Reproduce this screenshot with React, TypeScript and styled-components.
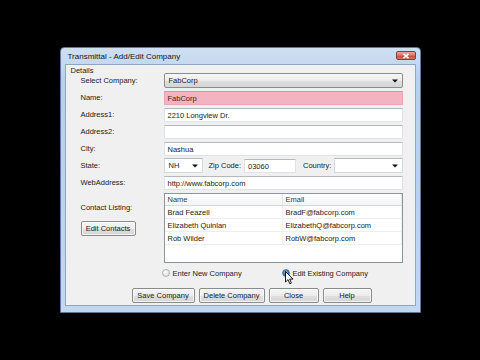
import React from "react";
import styled, { createGlobalStyle } from "styled-components";

const GlobalStyle = createGlobalStyle`
  html, body {
    margin: 0;
    padding: 0;
    background: #000;
  }
  body {
    font-family: "Liberation Sans", Arial, sans-serif;
    color: #1a1a1a;
  }
`;

const Screen = styled.div`
  width: 480px;
  height: 360px;
  display: flex;
  align-items: center;
  justify-content: center;
  background: #000;
`;

const Window = styled.div`
  position: relative;
  width: 361px;
  height: 266px;
  box-sizing: border-box;
  display: flex;
  flex-direction: column;
  padding: 0 4px 6px 4px;
  border: 1px solid #5d7a99;
  border-radius: 4px 4px 0 0;
  background: linear-gradient(#cfe0f3, #b9d0ea 12%, #bdd3ec 60%, #c3d8ef);
`;

const TitleBar = styled.div`
  height: 16px;
  display: flex;
  justify-content: space-between;
  padding-left: 3px;
`;

const Title = styled.span`
  font-size: 8px;
  line-height: 10px;
  margin-top: 4px;
  color: #141414;
`;

const CloseButton = styled.div`
  width: 20px;
  height: 9px;
  margin-top: 3px;
  box-sizing: border-box;
  display: flex;
  align-items: center;
  justify-content: center;
  border: 1px solid #8d3d38;
  border-radius: 2px;
  background: linear-gradient(#e9a99c, #d3705f 50%, #c4463a 51%, #d9745f);
`;

const Client = styled.div`
  position: relative;
  flex: 1;
  display: flex;
  flex-direction: column;
  background: #f0f0f0;
  border: 1px solid #8ea6c2;
`;

const GroupLabel = styled.div`
  height: 6px;
  margin: 2px 0 0 5px;
  font-size: 7.5px;
  line-height: 8px;
`;

const Form = styled.div`
  display: grid;
  grid-template-columns: 83px 1fr;
  grid-auto-rows: 15px;
  row-gap: 2px;
  padding: 0 12px 0 15px;
`;

const Label = styled.div`
  display: flex;
  align-items: center;
  font-size: 7.5px;
  white-space: nowrap;
`;

const InlineLabel = styled(Label)<{ $gap: number }>`
  margin: 0 3px 0 ${(p) => p.$gap}px;
`;

const TextBox = styled.div<{ $pink?: boolean; $width?: number }>`
  box-sizing: border-box;
  height: 14px;
  margin-top: 1px;
  ${(p) => (p.$width ? `width: ${p.$width}px;` : "flex: 1;")}
  padding-left: 3px;
  display: flex;
  align-items: center;
  font-size: 7.5px;
  background: ${(p) => (p.$pink ? "#f4b3c0" : "#fff")};
  border: 1px solid ${(p) => (p.$pink ? "#eaa5b3" : "#dfe3e8")};
  border-top-color: ${(p) => (p.$pink ? "#d9949f" : "#b4b8be")};
  color: ${(p) => (p.$pink ? "#3d1c22" : "#1a1a1a")};
`;

const Combo = styled.div<{ $flat?: boolean; $width?: number }>`
  box-sizing: border-box;
  height: 15px;
  ${(p) => (p.$width ? `width: ${p.$width}px;` : "flex: 1;")}
  padding: 0 4px 0 4px;
  display: flex;
  align-items: center;
  justify-content: space-between;
  font-size: 7.5px;
  border: 1px solid ${(p) => (p.$flat ? "#d6dbe1" : "#8b8d91")};
  border-top-color: ${(p) => (p.$flat ? "#b4b8be" : "#8b8d91")};
  border-radius: ${(p) => (p.$flat ? "0" : "2px")};
  background: ${(p) =>
    p.$flat ? "#fff" : "linear-gradient(#f7f7f7, #ececec 50%, #dedede 51%, #d5d5d5)"};
`;

const FieldRow = styled.div`
  display: flex;
`;

const Contacts = styled.div`
  display: grid;
  grid-template-columns: 83px 1fr;
  margin-top: 3px;
  padding: 0 12px 0 15px;
`;

const ContactSide = styled.div`
  display: flex;
  flex-direction: column;
  align-items: flex-start;
  padding-top: 10px;
  gap: 8px;
`;

const SideLabel = styled.div`
  height: 10px;
  line-height: 10px;
  font-size: 7.5px;
`;

const Button = styled.div<{ $width: number }>`
  box-sizing: border-box;
  width: ${(p) => p.$width}px;
  height: 15px;
  display: flex;
  align-items: center;
  justify-content: center;
  font-size: 7.5px;
  color: #1a1a1a;
  border: 1px solid #8a8a8a;
  border-radius: 2px;
  background: linear-gradient(#f5f5f5, #ececec 50%, #dfdfdf 51%, #d6d6d6);
  box-shadow: inset 0 0 0 1px rgba(255, 255, 255, 0.7);
`;

const Table = styled.div`
  box-sizing: border-box;
  height: 70px;
  background: #fff;
  border: 1px solid #8e949c;
`;

const TableRow = styled.div<{ $header?: boolean }>`
  display: grid;
  grid-template-columns: 118px 1fr;
  height: ${(p) => (p.$header ? "11px" : "12px")};
  border-bottom: 1px solid ${(p) => (p.$header ? "#d5d8dc" : "#eeeeee")};
  background: ${(p) => (p.$header ? "linear-gradient(#ffffff, #f3f4f6)" : "#fff")};
`;

const Cell = styled.div<{ $header?: boolean }>`
  display: flex;
  align-items: center;
  padding-left: 3px;
  font-size: 7.5px;
  white-space: nowrap;
  color: ${(p) => (p.$header ? "#3a3a3a" : "#1a1a1a")};
  border-right: 1px solid ${(p) => (p.$header ? "#e2e4e7" : "#f0f0f0")};
`;

const RadioRow = styled.div`
  display: grid;
  grid-template-columns: 120px 1fr;
  height: 14px;
  margin: 3px 0 0 96px;
`;

const RadioItem = styled.div`
  display: flex;
  align-items: center;
  gap: 3px;
  font-size: 7.5px;
`;

const RadioDot = styled.div<{ $checked?: boolean }>`
  box-sizing: border-box;
  width: 8px;
  height: 8px;
  border-radius: 50%;
  border: 1px solid ${(p) => (p.$checked ? "#5a7a9a" : "#b0b0b0")};
  background: ${(p) =>
    p.$checked
      ? "radial-gradient(circle at 45% 40%, #9fd0ef 0, #2f6fb0 55%, #1d4f86 100%)"
      : "radial-gradient(circle at 40% 35%, #ffffff 0, #e6e6e6 60%, #d2d2d2 100%)"};
`;

const ButtonBar = styled.div`
  display: flex;
  gap: 4px;
  height: 15px;
  margin-top: 8px;
  padding-left: 66px;
`;

const Pointer = styled.svg`
  position: absolute;
  left: 219px;
  top: 206px;
`;

const Arrow = () => (
  <svg width="6" height="4" viewBox="0 0 6 4">
    <path d="M0 0.5 L6 0.5 L3 3.5 Z" fill="#111" />
  </svg>
);

const contacts = [
  { name: "Brad Feazell", email: "BradF@fabcorp.com" },
  { name: "Elizabeth Quinlan", email: "ElizabethQ@fabcorp.com" },
  { name: "Rob Wilder", email: "RobW@fabcorp.com" },
];

const App = (): JSX.Element => {
  return (
    <Screen>
      <GlobalStyle />
      <Window>
        <TitleBar>
          <Title>Transmittal - Add/Edit Company</Title>
          <CloseButton>
            <svg width="8" height="6" viewBox="0 0 8 6">
              <path d="M1.5 0.8 L6.5 5.2 M6.5 0.8 L1.5 5.2" stroke="#fff" strokeWidth="1.6" />
            </svg>
          </CloseButton>
        </TitleBar>
        <Client>
          <GroupLabel>Details</GroupLabel>
          <Form>
            <Label>Select Company:</Label>
            <FieldRow>
              <Combo>
                <span>FabCorp</span>
                <Arrow />
              </Combo>
            </FieldRow>
            <Label>Name:</Label>
            <FieldRow>
              <TextBox $pink>FabCorp</TextBox>
            </FieldRow>
            <Label>Address1:</Label>
            <FieldRow>
              <TextBox>2210 Longview Dr.</TextBox>
            </FieldRow>
            <Label>Address2:</Label>
            <FieldRow>
              <TextBox />
            </FieldRow>
            <Label>City:</Label>
            <FieldRow>
              <TextBox>Nashua</TextBox>
            </FieldRow>
            <Label>State:</Label>
            <FieldRow>
              <Combo $flat $width={39}>
                <span>NH</span>
                <Arrow />
              </Combo>
              <InlineLabel $gap={6}>Zip Code:</InlineLabel>
              <TextBox $width={52}>03060</TextBox>
              <InlineLabel $gap={7}>Country:</InlineLabel>
              <Combo $flat>
                <span />
                <Arrow />
              </Combo>
            </FieldRow>
            <Label>WebAddress:</Label>
            <FieldRow>
              <TextBox>http://www.fabcorp.com</TextBox>
            </FieldRow>
          </Form>
          <Contacts>
            <ContactSide>
              <SideLabel>Contact Listing:</SideLabel>
              <Button $width={55}>Edit Contacts</Button>
            </ContactSide>
            <Table>
              <TableRow $header>
                <Cell $header>Name</Cell>
                <Cell $header>Email</Cell>
              </TableRow>
              {contacts.map((c) => (
                <TableRow key={c.name}>
                  <Cell>{c.name}</Cell>
                  <Cell>{c.email}</Cell>
                </TableRow>
              ))}
            </Table>
          </Contacts>
          <RadioRow>
            <RadioItem>
              <RadioDot />
              Enter New Company
            </RadioItem>
            <RadioItem>
              <RadioDot $checked />
              Edit Existing Company
            </RadioItem>
          </RadioRow>
          <ButtonBar>
            <Button $width={63}>Save Company</Button>
            <Button $width={66}>Delete Company</Button>
            <Button $width={50}>Close</Button>
            <Button $width={49}>Help</Button>
          </ButtonBar>
          <Pointer width="9" height="14" viewBox="0 0 9 14">
            <path
              d="M0.5 0.5 L0.5 11 L3 8.6 L4.8 12.8 L6.4 12.1 L4.7 8.1 L8 8.1 Z"
              fill="#fff"
              stroke="#000"
              strokeWidth="0.9"
              strokeLinejoin="round"
            />
          </Pointer>
        </Client>
      </Window>
    </Screen>
  );
};

export default App;
